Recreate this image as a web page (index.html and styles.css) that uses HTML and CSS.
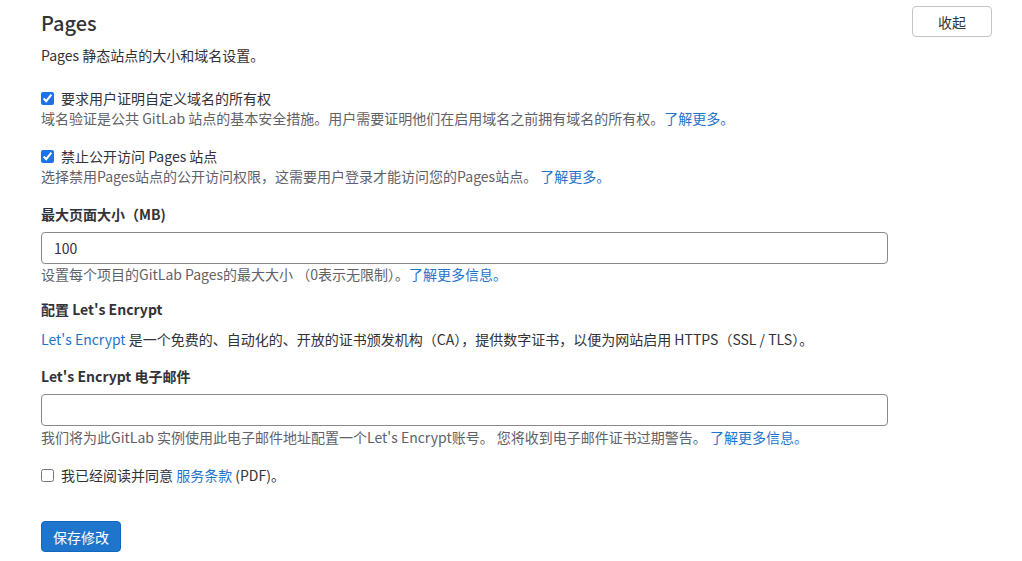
FILE: index.html
```html
<!DOCTYPE html>
<html lang="zh-CN">
<head>
<meta charset="utf-8">
<title>Pages</title>
<link rel="stylesheet" href="styles.css">
</head>
<body>
<section class="settings">
  <div class="settings-header">
    <div class="header-text">
      <h4 class="title">Pages</h4>
      <p class="desc">Pages 静态站点的大小和域名设置。</p>
    </div>
    <button class="btn btn-default" type="button">收起</button>
  </div>
  <form class="form">
    <div class="group check-group">
      <label class="check"><input type="checkbox" checked> <span>要求用户证明自定义域名的所有权</span></label>
      <p class="help">域名验证是公共 GitLab 站点的基本安全措施。用户需要证明他们在启用域名之前拥有域名的所有权。<a href="#">了解更多。</a></p>
    </div>
    <div class="group check-group">
      <label class="check"><input type="checkbox" checked> <span>禁止公开访问 Pages 站点</span></label>
      <p class="help">选择禁用Pages站点的公开访问权限，这需要用户登录才能访问您的Pages站点。 <a href="#">了解更多。</a></p>
    </div>
    <div class="group">
      <label class="label">最大页面大小（MB)</label>
      <input class="input" type="text" value="100">
      <p class="help">设置每个项目的GitLab Pages的最大大小 （0表示无限制）。<a href="#">了解更多信息。</a></p>
    </div>
    <div class="group group-le">
      <label class="label">配置 Let's Encrypt</label>
      <p class="text"><a href="#">Let's Encrypt</a> 是一个免费的、自动化的、开放的证书颁发机构（CA），提供数字证书，以便为网站启用 HTTPS（SSL / TLS）。</p>
    </div>
    <div class="group">
      <label class="label">Let's Encrypt 电子邮件</label>
      <input class="input" type="text" value="">
      <p class="help help-mail">我们将为此GitLab 实例使用此电子邮件地址配置一个Let's Encrypt账号。 您将收到电子邮件证书过期警告。 <a href="#">了解更多信息。</a></p>
    </div>
    <div class="group">
      <label class="check"><input type="checkbox"> <span>我已经阅读并同意 <a href="#">服务条款</a> (PDF)。</span></label>
    </div>
    <button class="btn btn-confirm" type="button">保存修改</button>
  </form>
</section>
</body>
</html>
```
FILE: styles.css
```css
* { box-sizing: border-box; }
html, body { margin: 0; padding: 0; background: #fff; }
body {
  font-family: "Noto Sans CJK SC", "Noto Sans", sans-serif;
  font-size: 14px;
  line-height: 20px;
  color: #333238;
}
a { color: #1f75cb; text-decoration: none; }
.settings { padding: 0 30px 0 41px; }
.settings-header {
  display: flex;
  justify-content: space-between;
  align-items: flex-start;
}
.title {
  margin: 9px 0 0;
  font-size: 20px;
  line-height: 28px;
  font-weight: 500;
  color: #333238;
}
.desc { margin: 8px 0 0; }
.btn {
  font-family: inherit;
  font-size: 14px;
  line-height: 20px;
  border-radius: 4px;
  cursor: pointer;
}
.btn-default {
  margin-top: 6px;
  width: 80px;
  height: 31px;
  background: #fff;
  border: 1px solid #c4c4c7;
  color: #333238;
  padding: 0;
}
.form { width: 847px; margin-top: 23px; }
.group { margin-bottom: 18px; }
.check-group { margin-bottom: 18px; }
.check {
  display: flex;
  align-items: center;
}
.check input {
  width: 13px;
  height: 13px;
  margin: 0 7px 0 0;
  accent-color: #1a73e8;
}
.help { margin: 0; color: #626168; }
.label {
  display: block;
  font-weight: 600;
  margin-bottom: 8px;
}
.group-le { margin-top: -3px; margin-bottom: 17px; }
.group-le .label { margin-bottom: 10px; }
.text { margin: 0; }
.input {
  display: block;
  width: 100%;
  height: 32px;
  border: 1px solid #89888d;
  border-radius: 4px;
  padding: 0 12px;
  font-family: inherit;
  font-size: 14px;
  color: #333238;
  outline: none;
}
.help-mail { margin-top: 1px; }
.btn-confirm {
  margin-top: 18px;
  width: 80px;
  height: 31px;
  padding: 0;
  background: #1f75cb;
  border: 1px solid #1068bf;
  color: #fff;
}
```
